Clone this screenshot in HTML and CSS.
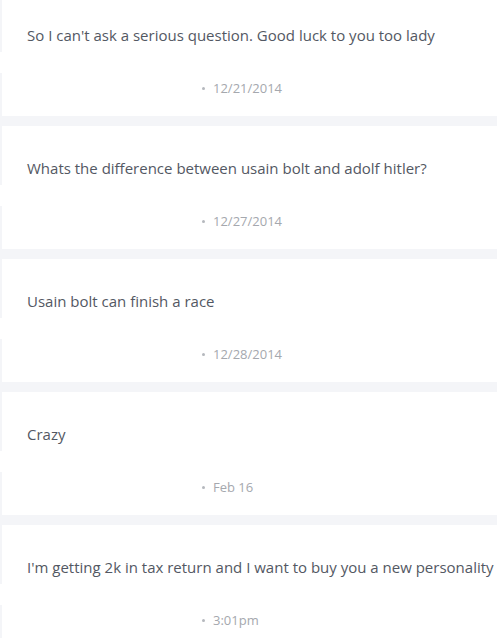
FILE: index.html
```html
<!DOCTYPE html>
<html lang="en">
<head>
    <meta charset="UTF-8">
    <meta name="viewport" content="width=device-width, initial-scale=1.0">
    <title>Messages</title>
    <link rel="stylesheet" href="styles.css">
</head>
<body>
    <div class="feed">
        <div class="card">
            <div class="card-body">So I can't ask a serious question. Good luck to you too lady</div>
            <div class="card-meta"><span class="dot"></span>12/21/2014</div>
        </div>
        <div class="card">
            <div class="card-body">Whats the difference between usain bolt and adolf hitler?</div>
            <div class="card-meta"><span class="dot"></span>12/27/2014</div>
        </div>
        <div class="card">
            <div class="card-body">Usain bolt can finish a race</div>
            <div class="card-meta"><span class="dot"></span>12/28/2014</div>
        </div>
        <div class="card">
            <div class="card-body">Crazy</div>
            <div class="card-meta"><span class="dot"></span>Feb 16</div>
        </div>
        <div class="card">
            <div class="card-body">I'm getting 2k in tax return and I want to buy you a new personality</div>
            <div class="card-meta"><span class="dot"></span>3:01pm</div>
        </div>
    </div>
</body>
</html>
```

FILE: styles.css
```css
body {
    margin: 0;
    background-color: #fff;
    font-family: 'Open Sans', 'Liberation Sans', sans-serif;
    overflow: hidden;
}
.feed {
    width: 497px;
    margin-top: -7px;
    display: flex;
    flex-direction: column;
    gap: 10px;
    background-color: #f4f5f8;
}
.card {
    background-color: #fff;
    height: 123px;
    display: flex;
    flex-direction: column;
}
.card-body {
    padding: 32px 0 7px 25px;
    border-left: 2px solid #f4f5f8;
    font-size: 15px;
    line-height: 20px;
    color: #535863;
    white-space: nowrap;
}
.card-meta {
    margin-top: 21px;
    flex: 1;
    padding: 5px 0 0 200px;
    border-left: 2px solid #f4f5f8;
    display: flex;
    align-items: flex-start;
    font-size: 13px;
    line-height: 20px;
    color: #a5a8ae;
}
.dot {
    width: 3px;
    height: 3px;
    border-radius: 50%;
    background-color: #b5b8bd;
    margin: 9px 8px 0 0;
}
```
